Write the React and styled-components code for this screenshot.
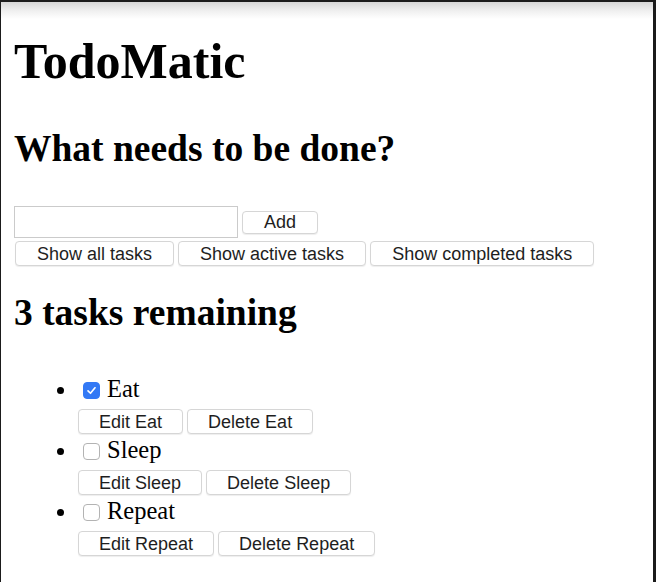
import { useState } from "react";
import styled, { createGlobalStyle } from "styled-components";

const GlobalStyle = createGlobalStyle`
  html, body {
    margin: 0;
    padding: 0;
    background: #fff;
  }
  body {
    font-family: "Liberation Serif", "Times New Roman", serif;
    color: #000;
  }
`;

const initialTasks = [
  { id: "todo-0", name: "Eat", completed: true },
  { id: "todo-1", name: "Sleep", completed: false },
  { id: "todo-2", name: "Repeat", completed: false },
];

const App = () => {
  const [tasks, setTasks] = useState(initialTasks);
  const [name, setName] = useState("");

  const toggleTask = (id) => {
    setTasks(
      tasks.map((task) =>
        task.id === id ? { ...task, completed: !task.completed } : task
      )
    );
  };

  return (
    <Frame>
      <GlobalStyle />
      <Title>TodoMatic</Title>
      <Heading $top={38}>What needs to be done?</Heading>
      <InputRow onSubmit={(e) => e.preventDefault()}>
        <TextInput
          type="text"
          value={name}
          onChange={(e) => setName(e.target.value)}
        />
        <Button type="submit" $height={23}>
          Add
        </Button>
      </InputRow>
      <FilterRow>
        <Button>Show all tasks</Button>
        <Button>Show active tasks</Button>
        <Button>Show completed tasks</Button>
      </FilterRow>
      <Heading $top={25}>3 tasks remaining</Heading>
      <TaskList>
        {tasks.map((task) => (
          <TaskItem key={task.id}>
            <Bullet />
            <TaskLabel onClick={() => toggleTask(task.id)}>
              <CheckBox $checked={task.completed}>
                {task.completed && (
                  <svg width="11" height="11" viewBox="0 0 12 12">
                    <path
                      d="M2.2 6.4 L4.9 9 L9.8 3"
                      fill="none"
                      stroke="#fff"
                      strokeWidth="1.8"
                      strokeLinecap="round"
                      strokeLinejoin="round"
                    />
                  </svg>
                )}
              </CheckBox>
              <TaskName>{task.name}</TaskName>
            </TaskLabel>
            <TaskButtons>
              <Button $pad={20}>Edit {task.name}</Button>
              <Button $pad={20}>Delete {task.name}</Button>
            </TaskButtons>
          </TaskItem>
        ))}
      </TaskList>
    </Frame>
  );
};

export default App;

const Frame = styled.div`
  display: flow-root;
  box-sizing: border-box;
  min-height: 582px;
  border-top: 2px solid #1b1b1b;
  border-left: 1px solid #1b1b1b;
  border-right: 3px solid #1b1b1b;
  padding: 0 13px;
  background: linear-gradient(#d6d6d6 0px, #f0f0f0 9px, #ffffff 17px);
`;

const Title = styled.h1`
  margin: 31px 0 0;
  font-size: 50px;
  line-height: 56px;
  font-weight: 700;
`;

const Heading = styled.h2`
  margin: ${(p) => p.$top}px 0 0;
  font-size: 37.5px;
  line-height: 44px;
  font-weight: 700;
`;

const InputRow = styled.form`
  display: flex;
  align-items: center;
  gap: 4px;
  margin-top: 35px;
`;

const TextInput = styled.input`
  box-sizing: border-box;
  width: 224px;
  height: 32px;
  margin: 0;
  padding: 2px 6px;
  border: 1px solid #cbcbcb;
  border-radius: 0;
  outline: none;
  font-family: "Liberation Sans", Arial, sans-serif;
  font-size: 18px;
`;

const Button = styled.button`
  box-sizing: border-box;
  height: ${(p) => p.$height || 25}px;
  margin: 0;
  padding: 0 ${(p) => p.$pad || 21}px;
  background: #fff;
  color: #1e1e1e;
  border: 1px solid #d6d6d6;
  border-radius: 4px;
  box-shadow: 0 1px 1px rgba(0, 0, 0, 0.07);
  font-family: "Liberation Sans", Arial, sans-serif;
  font-size: 18px;
  line-height: 1;
  white-space: nowrap;
  cursor: pointer;
`;

const FilterRow = styled.div`
  display: flex;
  gap: 4px;
  margin-top: 3px;
  padding-left: 1px;
`;

const TaskList = styled.ul`
  list-style: none;
  margin: 39px 0 0;
  padding: 0;
`;

const TaskItem = styled.li`
  display: grid;
  grid-template-columns: 64px auto;
  grid-template-rows: 30px 25px;
  row-gap: 5px;
  margin-bottom: 1px;
`;

const Bullet = styled.span`
  grid-column: 1;
  grid-row: 1;
  align-self: center;
  justify-self: end;
  width: 7px;
  height: 7px;
  margin: 3px 14px 0 0;
  border-radius: 50%;
  background: #000;
`;

const TaskLabel = styled.label`
  grid-column: 2;
  grid-row: 1;
  display: flex;
  align-items: center;
  gap: 7px;
  font-size: 24.5px;
  line-height: 30px;
  cursor: pointer;
`;

const CheckBox = styled.span`
  box-sizing: border-box;
  display: flex;
  align-items: center;
  justify-content: center;
  width: 17px;
  height: 17px;
  margin: 2px 0 0 5px;
  border-radius: 4px;
  border: 1px solid ${(p) => (p.$checked ? "#3379f5" : "#b3b3b3")};
  background: ${(p) => (p.$checked ? "#3379f5" : "#fff")};
`;

const TaskName = styled.span`
  color: #000;
`;

const TaskButtons = styled.div`
  grid-column: 2;
  grid-row: 2;
  display: flex;
  gap: 4px;
`;
